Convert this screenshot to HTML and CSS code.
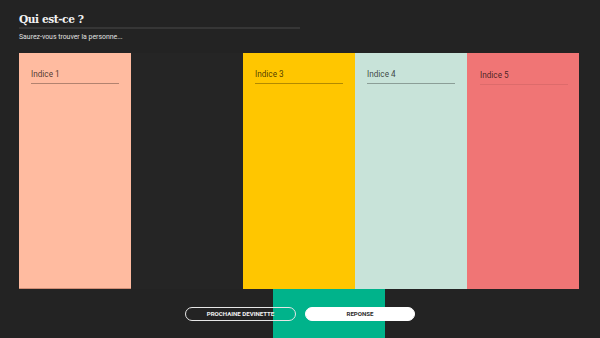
FILE: index.html
```html
<!DOCTYPE html>
<html lang="fr">
<head>
<meta charset="utf-8">
<title>Qui est-ce ?</title>
<link rel="stylesheet" href="styles.css">
</head>
<body>
<div class="page">
  <header class="header">
    <h1 class="title">Qui est-ce ?</h1>
    <p class="subtitle">Saurez-vous trouver la personne...</p>
  </header>
  <main class="cards">
    <div class="card card-1"><div class="card-label">Indice 1</div></div>
    <div class="card card-2"><div class="card-label"></div></div>
    <div class="card card-3"><div class="card-label">Indice 3</div></div>
    <div class="card card-4"><div class="card-label">Indice 4</div></div>
    <div class="card card-5"><div class="card-label">Indice 5</div></div>
  </main>
  <div class="card-6"></div>
  <footer class="actions">
    <button class="btn btn-outline">PROCHAINE DEVINETTE</button>
    <button class="btn btn-solid">REPONSE</button>
  </footer>
</div>
</body>
</html>
```
FILE: styles.css
```css
html, body {
  margin: 0;
  padding: 0;
  background: #232323;
  height: 100%;
  overflow: hidden;
}
.page {
  position: relative;
  width: 600px;
  height: 338px;
  font-family: Roboto, "Liberation Sans", sans-serif;
}
.header {
  padding: 12px 0 0 19px;
}
.title {
  margin: 0;
  width: 281px;
  font-family: "DejaVu Serif Condensed", "DejaVu Serif", serif;
  font-weight: bold;
  font-size: 11.8px;
  letter-spacing: -0.45px;
  line-height: 14px;
  color: #f2f2f2;
  padding-bottom: 1px;
  border-bottom: 2px solid #363636;
}
.subtitle {
  margin: 4px 0 0 0;
  font-size: 6.9px;
  line-height: 9px;
  color: #e0e0e0;
}
.cards {
  display: flex;
  margin: 11px 0 0 19px;
  height: 236px;
}
.card {
  width: 112px;
  height: 236px;
  box-sizing: border-box;
  padding: 15px 12px 0 12px;
}
.card-label {
  font-size: 8.2px;
  line-height: 12px;
  color: rgba(0, 0, 0, 0.72);
  height: 15px;
  border-bottom: 1px solid rgba(0, 0, 0, 0.3);
}
.card-1 { background: #ffbba0; box-shadow: inset 0 -1px 0 rgba(120, 60, 40, 0.35); }
.card-2 { background: #252525; }
.card-2 .card-label { border-bottom-color: transparent; }
.card-3 { background: #ffc600; }
.card-4 { background: #c8e3d9; }
.card-5 { background: #f07575; padding: 16px 11px 0 13px; }
.card-5 .card-label { border-bottom-color: rgba(0, 0, 0, 0.08); }
.card-6 {
  position: absolute;
  left: 273px;
  top: 289px;
  width: 112px;
  height: 60px;
  background: #00b38b;
}
.actions {
  position: relative;
  display: flex;
  justify-content: center;
  gap: 9px;
  margin-top: 18px;
}
.btn {
  width: 111px;
  height: 14px;
  box-sizing: border-box;
  border-radius: 7px;
  font-family: Roboto, "Liberation Sans", sans-serif;
  font-weight: bold;
  font-size: 6.1px;
  line-height: 12px;
  padding: 0;
  text-align: center;
}
.btn-outline {
  background: transparent;
  border: 1px solid #e6e6e6;
  color: #f2f2f2;
}
.btn-solid {
  width: 110px;
  background: #ffffff;
  border: 1px solid #ffffff;
  color: #2a2a2a;
}
```
